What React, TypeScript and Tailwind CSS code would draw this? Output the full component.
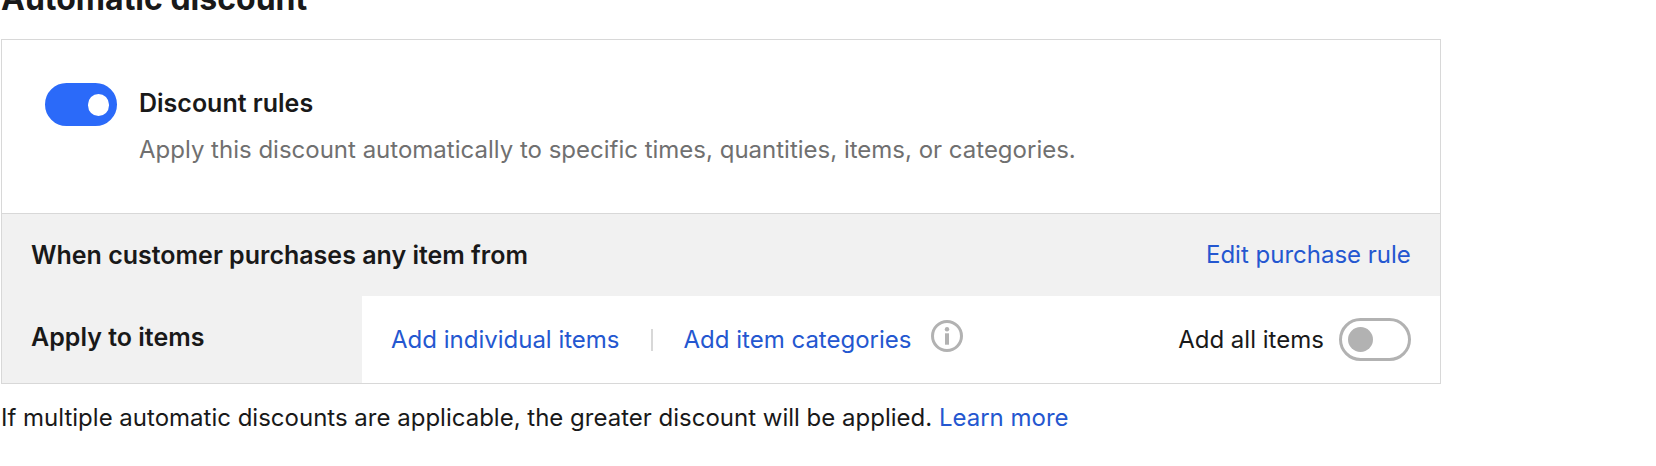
import { useState, type ComponentProps } from 'react'
import clsx from 'clsx'

const linkClass = 'text-[#2457d0] hover:underline'
const titleClass = 'text-[25px] leading-8 font-semibold'

// The knob is the input's own ::before; off shows an outlined track, on a filled one.
function Switch({ className, ...props }: ComponentProps<'input'>) {
  return (
    <input
      type="checkbox"
      role="switch"
      className={clsx(
        'flex h-[43px] w-[72px] shrink-0 cursor-pointer appearance-none items-center rounded-full border-3 border-[#b2b2b2] bg-white px-1.5',
        'before:size-[25px] before:rounded-full before:bg-[#b2b2b2]',
        'checked:justify-end checked:border-[#2b6af9] checked:bg-[#2b6af9] checked:px-[5px]',
        'checked:before:h-[22px] checked:before:w-[21px] checked:before:bg-white',
        className
      )}
      {...props}
    />
  )
}

function InfoIcon() {
  return (
    <svg viewBox="0 0 32 32" className="size-8" fill="none" aria-hidden="true">
      <circle cx="16" cy="16" r="14.5" stroke="#b2b2b2" strokeWidth="3" />
      <circle cx="16" cy="9.3" r="2.2" fill="#b2b2b2" />
      <path d="M14 13.3h4v11.4h-4z" fill="#b2b2b2" />
    </svg>
  )
}

export default function App() {
  const [rulesOn, setRulesOn] = useState(true)
  const [allItems, setAllItems] = useState(false)

  return (
    <main className="overflow-hidden bg-white pl-px font-['Inter',sans-serif] text-[24px] leading-8 text-[#191919]">
      <h1 className="-mt-[23px] text-[32px] leading-[44px] font-bold">Automatic discount</h1>

      <section className="mt-[18px] w-[87%] border border-[#d8d8d8]">
        <div className="flex gap-[22px] px-[43px] pt-[43px] pb-[47px]">
          <Switch
            id="discount-rules"
            checked={rulesOn}
            onChange={(e) => setRulesOn(e.target.checked)}
          />
          <div className="pt-1">
            <label htmlFor="discount-rules" className={clsx('block', titleClass)}>
              Discount rules
            </label>
            <p className="mt-[15px] text-[#707070]">
              Apply this discount automatically to specific times, quantities, items, or categories.
            </p>
          </div>
        </div>

        <div className="flex items-center justify-between border-t border-[#d8d8d8] bg-[#f1f1f1] px-[29px] py-[25px]">
          <h2 className={titleClass}>When customer purchases any item from</h2>
          <a href="#purchase-rule" className={linkClass}>
            Edit purchase rule
          </a>
        </div>

        <div className="flex">
          <h3 className={clsx('w-[360px] shrink-0 bg-[#f1f1f1] pt-[25px] pl-[29px]', titleClass)}>
            Apply to items
          </h3>
          <div className="flex flex-1 items-center px-[29px] py-[22px]">
            <a href="#items" className={linkClass}>
              Add individual items
            </a>
            <span className="mx-[31px] h-[22px] w-0.5 bg-[#d8d8d8]" />
            <a href="#categories" className={linkClass}>
              Add item categories
            </a>
            <button type="button" aria-label="About item categories" className="mb-2 ml-5">
              <InfoIcon />
            </button>
            <label className="ml-auto flex items-center gap-[15px]">
              Add all items
              <Switch checked={allItems} onChange={(e) => setAllItems(e.target.checked)} />
            </label>
          </div>
        </div>
      </section>

      <p className="mt-[18px]">
        If multiple automatic discounts are applicable, the greater discount will be applied.{' '}
        <a href="#learn-more" className={linkClass}>
          Learn more
        </a>
      </p>
    </main>
  )
}
